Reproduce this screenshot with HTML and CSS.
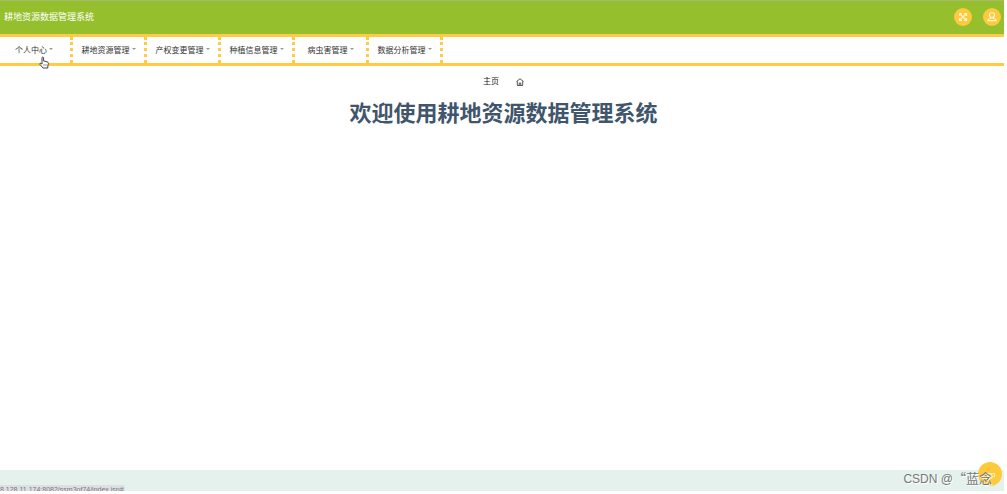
FILE: index.html
```
<!DOCTYPE html>
<html lang="zh-CN">
<head>
  <meta charset="utf-8">
  <title>耕地资源数据管理系统</title>
  <link rel="stylesheet" href="styles.css">
</head>
<body>
  <header class="navbar">
    <a class="brand" href="#">耕地资源数据管理系统</a>
    <div class="tools">
      <button class="round" type="button" aria-label="全屏">
        <svg viewBox="0 0 18 18" width="18" height="18" fill="none" stroke="#fff6d2" stroke-width="1.2">
          <path d="M6 6l6 6M12 6l-6 6"/>
          <path d="M5.500 8V5.500H8M10 5.500h2.500V8M12.500 10v2.500H10M8 12.500H5.500V10"/>
        </svg>
      </button>
      <button class="round" type="button" aria-label="用户">
        <svg viewBox="0 0 18 18" width="18" height="18" fill="none" stroke="#fff6d2" stroke-width="1.200">
          <circle cx="9" cy="7" r="2.500"/>
          <path d="M7.700 9.300v1.200c-1.800.3-2.900 1-3 2.200h8.600c-.1-1.200-1.200-1.900-3-2.200V9.300"/>
        </svg>
      </button>
    </div>
  </header>

  <nav class="menu">
    <a class="menu-item" href="#">个人中心<span class="caret"></span>
      <svg class="pointer" viewBox="0 0 10 13" width="10" height="13" fill="#fff" stroke="#444" stroke-width="1" stroke-linejoin="round">
        <path d="M3 8V1.500q.8-1 1.600 0V5l3.500.8q1.400.4 1.300 1.700L8.800 10v2H4L1 8.500q-.6-1.500.8-1.200z"/>
        <path d="M5 8v2M7 8v2" stroke="#999"/>
      </svg>
    </a>
    <a class="menu-item" href="#">耕地资源管理<span class="caret"></span></a>
    <a class="menu-item" href="#">产权变更管理<span class="caret"></span></a>
    <a class="menu-item" href="#">种植信息管理<span class="caret"></span></a>
    <a class="menu-item" href="#">病虫害管理<span class="caret"></span></a>
    <a class="menu-item" href="#">数据分析管理<span class="caret"></span></a>
  </nav>

  <main class="content">
    <div class="breadcrumb">
      <a href="#">主页</a>
      <a href="#" aria-label="首页">
        <svg viewBox="0 0 8 8" width="8" height="8" fill="none" stroke="#555" stroke-width="1">
          <path d="M.5 3.500L4 .8l3.500 2.700M1.300 3.200v4.300h5.400V3.200M3.200 7.500V5h1.600v2.500"/>
        </svg>
      </a>
    </div>
    <h1 class="welcome">欢迎使用耕地资源数据管理系统</h1>
  </main>

  <footer class="footer">
    <div class="status">8.128.11.174:8082/ssm3of74/index.jsp#</div>
    <button class="to-top" type="button">top</button>
    <div class="watermark">CSDN @<span class="author">“蓝念</span></div>
  </footer>
</body>
</html>
```
FILE: styles.css
```
* {
  box-sizing: border-box;
}

body {
  display: flex;
  flex-direction: column;
  min-height: 100vh;
  margin: 0;
  padding: 0 3px 3px 0;
  background: #fff;
  font-family: "Liberation Sans", "Noto Sans CJK SC", sans-serif;
  font-size: 8px;
  color: #333;
}

a {
  color: inherit;
  text-decoration: none;
}

button {
  padding: 0;
  border: none;
  background: #ffc93c;
  cursor: pointer;
}

.navbar {
  display: flex;
  align-items: center;
  justify-content: space-between;
  height: 34px;
  padding: 0 3px 2px 4px;
  background: #95bf2d;
  border-top: 1px solid #a5bc70;
}

.brand {
  color: #fff;
  font-size: 9px;
}

.tools {
  display: flex;
  gap: 11px;
}

.round {
  width: 18px;
  height: 18px;
  border-radius: 50%;
}

.round svg {
  display: block;
}

.menu {
  display: flex;
  height: 32px;
  border-top: 3px solid #ffcb45;
  border-bottom: 3px solid #ffcb45;
}

.menu-item {
  position: relative;
  display: flex;
  align-items: center;
  justify-content: center;
  gap: 2px;
  width: 74px;
  padding-bottom: 2px;
  border-right: 3px dotted #ffcb45;
}

.menu-item:first-child {
  width: 73px;
  padding-right: 2px;
}

.caret {
  border: 2px solid transparent;
  border-top-color: #999;
  border-bottom: none;
}

/* hand cursor over the open menu */
.pointer {
  position: absolute;
  left: 39px;
  top: 19px;
  z-index: 1;
}

.content {
  flex: 1;
  margin-right: -3px;
  text-align: center;
}

.breadcrumb {
  display: flex;
  align-items: center;
  justify-content: center;
  gap: 17px;
  padding-top: 10px;
  line-height: 12px;
  color: #222;
}

.breadcrumb svg {
  display: block;
}

.welcome {
  margin: 10px 0 0;
  font-size: 22px;
  line-height: 32px;
  color: #3f566c;
}

.footer {
  position: relative;
  height: 21px;
  background: #e4f1ec;
}

.status {
  position: absolute;
  left: 0;
  bottom: 0;
  width: 125px;
  height: 6px;
  overflow: hidden;
  background: #dcdfe3;
  border-top-right-radius: 2px;
  font-size: 7px;
  line-height: 9px;
  color: #777;
  white-space: nowrap;
}

.to-top {
  position: absolute;
  right: 2px;
  bottom: 5px;
  width: 24px;
  height: 24px;
  border-radius: 50%;
  color: #fff;
  font-family: inherit;
  font-size: 8px;
}

.watermark {
  position: absolute;
  right: 12px;
  bottom: 4px;
  font-size: 12px;
  line-height: 16px;
  color: #777;
  text-shadow: 1px 1px 0 #fff;
}

.author {
  font-family: "Noto Sans CJK SC", sans-serif;
  font-size: 13px;
}
```
